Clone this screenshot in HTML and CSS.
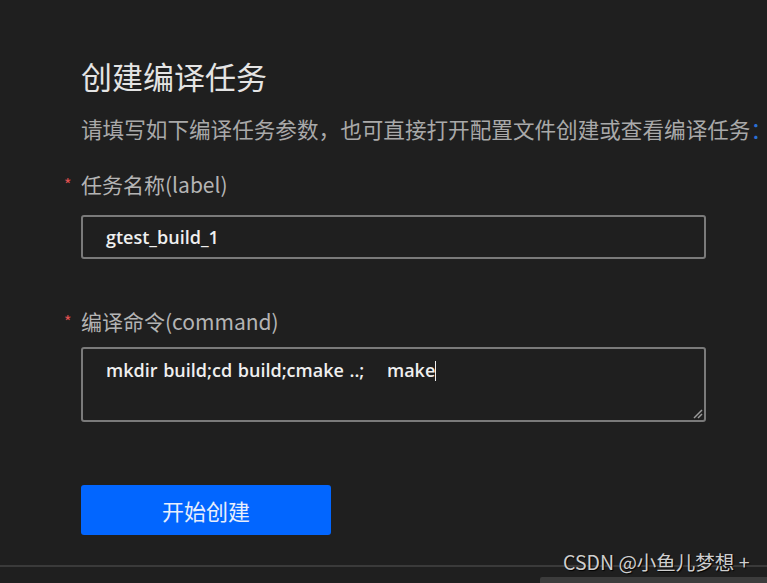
FILE: index.html
```html
<!DOCTYPE html>
<html lang="zh-CN">
<head>
<meta charset="UTF-8" />
<meta name="viewport" content="width=device-width, initial-scale=1.0" />
<title>创建编译任务</title>
<link rel="stylesheet" href="styles.css">
</head>
<body>
<div class="page">
  <h1 class="title">创建编译任务</h1>
  <p class="desc">请填写如下编译任务参数，也可直接打开配置文件创建或查看编译任务<span class="link">：</span></p>

  <div class="field">
    <label class="label"><span class="star">*</span>任务名称(label)</label>
    <div class="input">gtest_build_1</div>
  </div>

  <div class="field">
    <label class="label"><span class="star">*</span>编译命令(command)</label>
    <div class="textarea">
      <span>mkdir build;cd build;cmake ..;&nbsp;&nbsp;&nbsp;&nbsp;make</span><span class="caret"></span>
      <svg class="grip" width="12" height="12" viewBox="0 0 12 12">
        <path d="M11 3 L3 11 M11 7 L7 11" stroke="#9a9a9a" stroke-width="1.5" fill="none"/>
      </svg>
    </div>
  </div>

  <button class="btn">开始创建</button>
</div>
<div class="footer-line"></div>
<div class="scroll-thumb"></div>
<div class="watermark">CSDN @小鱼儿梦想 +</div>
</body>
</html>
```

FILE: styles.css
```css
html, body {
  margin: 0;
  height: 100%;
  background: #1f1f1f;
  overflow: hidden;
}
body {
  font-family: "Noto Sans CJK SC", "Open Sans", sans-serif;
  position: relative;
}
.page {
  padding: 56px 0 0 81px;
  width: 625px;
}
.title {
  margin: 0;
  font-size: 31px;
  line-height: 40px;
  font-weight: 400;
  color: #e4e4e4;
}
.desc {
  margin: 18px 0 0;
  font-size: 21.6px;
  line-height: 30px;
  color: #a9a9a9;
  white-space: nowrap;
}
.link {
  color: #2a6fd6;
}
.field {
  margin-top: 26px;
}
.field + .field {
  margin-top: 48px;
}
.label {
  display: flex;
  align-items: center;
  margin-left: -17px;
  font-size: 21px;
  line-height: 28px;
  color: #b4b4b4;
}
.star {
  width: 17px;
  color: #e05050;
  font-size: 16px;
}
.input, .textarea {
  box-sizing: border-box;
  border: 2px solid #7a7a7a;
  border-radius: 3px;
  padding: 0 23px;
  font-family: "Open Sans", "Noto Sans CJK SC", sans-serif;
  font-weight: 600;
  font-size: 18px;
  color: #efefef;
}
.input {
  margin-top: 17px;
  height: 44px;
  line-height: 40px;
}
.textarea {
  position: relative;
  margin-top: 12px;
  height: 75px;
  padding-top: 9px;
  line-height: 24px;
  word-spacing: 1px;
}
.caret {
  display: inline-block;
  width: 1px;
  height: 20px;
  background: #efefef;
  vertical-align: -4px;
}
.grip {
  position: absolute;
  right: 1px;
  bottom: 1px;
}
.btn {
  display: block;
  margin-top: 63px;
  width: 250px;
  height: 50px;
  border: 0;
  border-radius: 3px;
  background: #0266ff;
  color: #e8eefc;
  font-family: "Noto Sans CJK SC", sans-serif;
  font-size: 22px;
}
.footer-line {
  position: absolute;
  left: 0;
  right: 0;
  top: 565px;
  height: 2px;
  background: #3a3a3a;
}
.scroll-thumb {
  position: absolute;
  left: 540px;
  right: 0;
  top: 577px;
  height: 6px;
  background: #3c3c3c;
  border-radius: 2px 0 0 0;
}
.watermark {
  position: absolute;
  left: 563px;
  top: 548px;
  font-family: "Noto Sans CJK SC", sans-serif;
  font-size: 19.5px;
  line-height: 28px;
  color: #cfcfcf;
  text-shadow: 1px 1px 1px #000;
}
```
